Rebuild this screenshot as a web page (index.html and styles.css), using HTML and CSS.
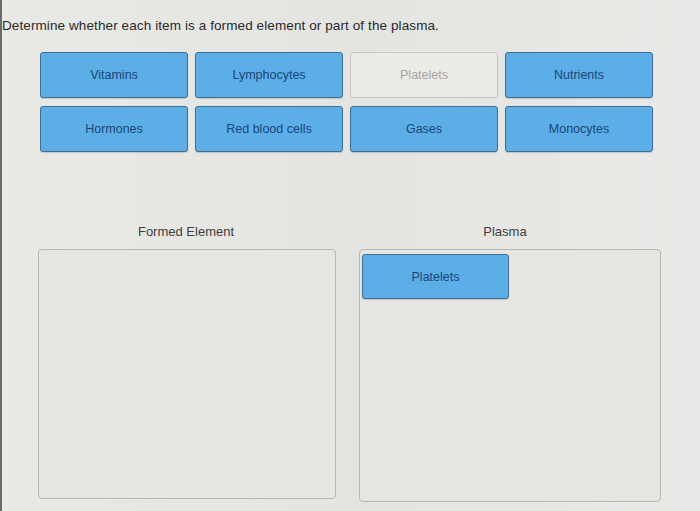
FILE: index.html
```html
<!DOCTYPE html>
<html>
<head>
<meta charset="utf-8">
<link rel="stylesheet" href="styles.css">
</head>
<body>
<div class="page">
  <p class="prompt">Determine whether each item is a formed element or part of the plasma.</p>
  <div class="choices">
    <div class="chip">Vitamins</div>
    <div class="chip">Lymphocytes</div>
    <div class="chip ghost">Platelets</div>
    <div class="chip">Nutrients</div>
    <div class="chip">Hormones</div>
    <div class="chip">Red blood cells</div>
    <div class="chip">Gases</div>
    <div class="chip">Monocytes</div>
  </div>
  <div class="zones">
    <div class="zone zone-left">
      <div class="zone-label">Formed Element</div>
      <div class="bin"></div>
    </div>
    <div class="zone zone-right">
      <div class="zone-label">Plasma</div>
      <div class="bin">
        <div class="chip placed">Platelets</div>
      </div>
    </div>
  </div>
</div>
</body>
</html>
```

FILE: styles.css
```css
html, body {
  margin: 0;
  padding: 0;
}
body {
  width: 700px;
  height: 511px;
  overflow: hidden;
  background: #e7e7e4;
  font-family: "Liberation Sans", Arial, sans-serif;
}
.page {
  position: relative;
  height: 511px;
  border-left: 2px solid #6b6b6b;
  box-sizing: border-box;
  background: linear-gradient(90deg, #e9e9e6 0%, #e4e4e1 50%, #e9e9e7 100%);
}
.prompt {
  margin: 0;
  padding-top: 18px;
  padding-left: 0;
  font-size: 13.5px;
  line-height: 16px;
  color: #2a2a2a;
  letter-spacing: 0.1px;
}
.choices {
  display: grid;
  grid-template-columns: repeat(4, 148px);
  grid-auto-rows: 46px;
  column-gap: 7px;
  row-gap: 8px;
  margin-top: 18px;
  padding-left: 38px;
}
.chip {
  display: flex;
  align-items: center;
  justify-content: center;
  box-sizing: border-box;
  background: #5caee6;
  border: 1px solid #3f6f97;
  border-radius: 3px;
  color: #1a4676;
  font-size: 12.5px;
  box-shadow: 0 1px 1px rgba(0, 0, 0, 0.15);
}
.chip.ghost {
  background: #ecebe8;
  border-color: #c4c4c2;
  color: #a4a4a4;
  box-shadow: none;
}
.zones {
  display: grid;
  grid-template-columns: 298px 302px;
  column-gap: 23px;
  margin-top: 71px;
  padding-left: 36px;
}
.zone {
  display: flex;
  flex-direction: column;
}
.zone-label {
  height: 17px;
  font-size: 13px;
  line-height: 17px;
  color: #3e3e3e;
  text-align: center;
}
.zone-left .zone-label {
  padding-right: 2px;
}
.zone-right .zone-label {
  padding-right: 10px;
}
.bin {
  margin-top: 9px;
  height: 250px;
  box-sizing: border-box;
  border: 1px solid #b6b6b3;
  border-radius: 4px;
  background: #e6e5e1;
  padding: 4px 2px;
}
.zone-right .bin {
  height: 253px;
}
.chip.placed {
  width: 147px;
  height: 45px;
}
```
